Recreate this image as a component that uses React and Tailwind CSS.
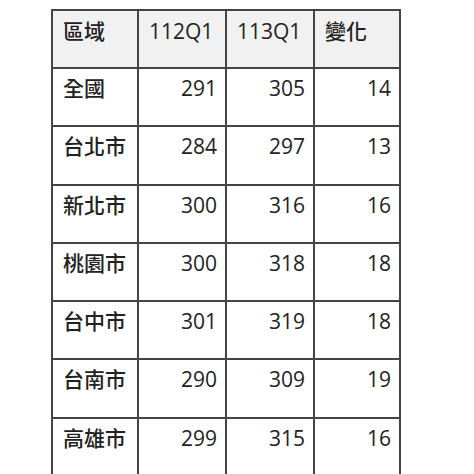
const headers = ['區域', '112Q1', '113Q1', '變化'];

const rows = [
  ['全國', 291, 305, 14],
  ['台北市', 284, 297, 13],
  ['新北市', 300, 316, 16],
  ['桃園市', 300, 318, 18],
  ['台中市', 301, 319, 18],
  ['台南市', 290, 309, 19],
  ['高雄市', 299, 315, 16],
];

const widths = ['w-[86px]', 'w-[88px]', 'w-[88px]', 'w-[86px]'];

export default function App() {
  return (
    <div
      className="w-[474px] h-[474px] overflow-hidden bg-white pt-[9px] pl-[51px]"
      style={{ fontFamily: '"Open Sans", "Noto Sans CJK TC", sans-serif' }}
    >
      <table className="border-collapse table-fixed text-[21px] leading-[28px] text-[#222]">
        <thead>
          <tr className="h-[58px] bg-[#f1f1f1]">
            {headers.map((h, i) => (
              <th
                key={h}
                className={`${widths[i]} border-2 border-[#444] align-top text-left px-[10px] pt-[6px] ${
                  i === 0 || i === 3 ? 'font-medium' : 'font-normal'
                }`}
              >
                {h}
              </th>
            ))}
          </tr>
        </thead>
        <tbody>
          {rows.map((r) => (
            <tr key={r[0]} className="h-[58.3px]">
              <td className="border-2 border-[#444] align-top text-left font-medium px-[10px] pt-[5px]">{r[0]}</td>
              <td className="border-2 border-[#444] align-top text-right px-[8px] pt-[5px]">{r[1]}</td>
              <td className="border-2 border-[#444] align-top text-right px-[8px] pt-[5px]">{r[2]}</td>
              <td className="border-2 border-[#444] align-top text-right px-[8px] pt-[5px]">{r[3]}</td>
            </tr>
          ))}
        </tbody>
      </table>
    </div>
  );
}
